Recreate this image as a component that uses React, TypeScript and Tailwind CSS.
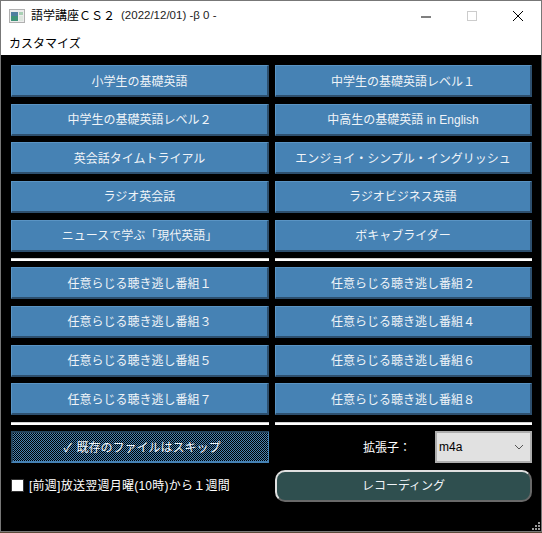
const font = "font-['Liberation_Sans','Noto_Sans_CJK_JP',sans-serif]";

const courses = [
  "小学生の基礎英語",
  "中学生の基礎英語レベル１",
  "中学生の基礎英語レベル２",
  "中高生の基礎英語 in English",
  "英会話タイムトライアル",
  "エンジョイ・シンプル・イングリッシュ",
  "ラジオ英会話",
  "ラジオビジネス英語",
  "ニュースで学ぶ「現代英語」",
  "ボキャブライダー",
];

const optional = [1, 2, 3, 4, 5, 6, 7, 8].map((n) => "任意らじる聴き逃し番組" + String.fromCharCode(0xff10 + n));

const CourseButton = ({ label }: { label: string }) => (
  <button className="h-[32px] pt-[2px] bg-[#4682b4] border-t border-l border-t-[#5a94c4] border-l-[#5a94c4] border-b-2 border-r-2 border-b-[#2d4f6e] border-r-[#2d4f6e] text-[12px] text-[#f0f4f8] text-center">
    {label}
  </button>
);

const Divider = () => (
  <div className="col-span-2 h-[2.33px] grid grid-cols-[258px_257px] gap-x-[6px]">
    <div className="h-[3px] bg-white border-t border-t-[#d0d0d0]" />
    <div className="h-[3px] bg-white border-t border-t-[#d0d0d0]" />
  </div>
);

const App = () => {
  return (
    <div className={`${font} w-[542px] h-[533px] bg-[#5a4a3a] overflow-hidden`}>
      <div className="m-0 w-[542px] h-[532px] border border-[#777777] flex flex-col bg-black">
        {/* title bar */}
        <div className="h-[29px] pt-[1px] bg-white flex items-center shrink-0">
          <svg width="16" height="14" viewBox="0 0 16 14" className="ml-[8px] mr-[6px]">
            <rect x="0.5" y="0.5" width="15" height="13" fill="#ececec" stroke="#b0b0b0" />
            <rect x="2" y="3" width="7" height="4" fill="#4f7f9f" />
            <rect x="2" y="7" width="7" height="5" fill="#3f9378" />
            <rect x="10" y="3" width="4" height="3" fill="#a8d0b4" />
            <rect x="10" y="7" width="4" height="5" fill="#dde6de" />
          </svg>
          <span className="text-[12px] text-black whitespace-pre">語学講座ＣＳ２</span>
          <span className="ml-[6px] text-[11.5px] text-[#222222] whitespace-pre">(2022/12/01) -β 0 -</span>
          <div className="ml-auto flex items-center">
            <svg width="46" height="29" viewBox="0 0 46 29"><path d="M18 15h10" stroke="#000" /></svg>
            <svg width="46" height="29" viewBox="0 0 46 29"><rect x="18.5" y="9.5" width="9" height="9" fill="none" stroke="#cccccc" /></svg>
            <svg width="46" height="29" viewBox="0 0 46 29"><path d="M18 9l10 10M28 9L18 19" stroke="#000" /></svg>
          </div>
        </div>
        {/* menu */}
        <div className="h-[25px] pt-[2px] bg-white flex items-center pl-[8px] text-[12px] text-black shrink-0">カスタマイズ</div>

        {/* body */}
        <div className="flex-1 pl-[10px] pt-[10px] relative">
          <div className="grid grid-cols-[258px_257px] gap-x-[6px] gap-y-[6.67px]">
            {courses.map((c) => (
              <CourseButton key={c} label={c} />
            ))}
            <Divider />
            {optional.map((c) => (
              <CourseButton key={c} label={c} />
            ))}
            <Divider />
          </div>

          <div className="mt-[6.67px] grid grid-cols-[258px_257px] gap-x-[6px]">
            <button className="h-[32px] pt-[2px] pl-[3px] border-t-2 border-l-2 border-t-[#24435c] border-l-[#24435c] border-b-2 border-r border-b-[#4682b4] border-r-[#4682b4] bg-[repeating-conic-gradient(#4682b4_0_25%,#000000_0_50%)] bg-[length:2px_2px] text-[12px] text-[#f0f4f8]">
              ✓<span className="ml-[5px]">既存のファイルはスキップ</span>
            </button>
            <div className="flex items-center">
              <span className="ml-[88px] w-[72px] pt-[2px] text-[12px] text-white">拡張子：</span>
              <div className="w-[97px] h-[32px] bg-[#e1e1e1] border-2 border-[#adadad] flex items-center justify-between pl-[2px] pr-[6px] text-[12px] text-black">
                m4a
                <svg width="10" height="6" viewBox="0 0 10 6"><path d="M1 1l4 4 4-4" fill="none" stroke="#555" /></svg>
              </div>
            </div>
          </div>

          <div className="mt-[6.67px] grid grid-cols-[258px_257px] gap-x-[6px]">
            <div className="flex items-center h-[32px] text-[12px] tracking-[0.25px] text-white">
              <span className="w-[13px] h-[13px] bg-white border border-[#333333] mr-[5px]" />
              [前週]放送翌週月曜(10時)から１週間
            </div>
            <button className="h-[32px] pt-[1px] rounded-[10px] bg-[#2f4f4f] border-2 border-t-[#e0e0e0] border-l-[#e0e0e0] border-b-[#696969] border-r-[#696969] text-[12px] text-[#f0f4f8]">
              レコーディング
            </button>
          </div>

          {/* resize grip */}
          <svg width="10" height="10" viewBox="0 0 10 10" className="absolute right-0 bottom-0">
            <path d="M7 1h2v2H7zM4 4h2v2H4zM7 4h2v2H7zM1 7h2v2H1zM4 7h2v2H4zM7 7h2v2H7z" fill="#9a9a9a" />
          </svg>
        </div>
      </div>
    </div>
  );
};

export default App;
